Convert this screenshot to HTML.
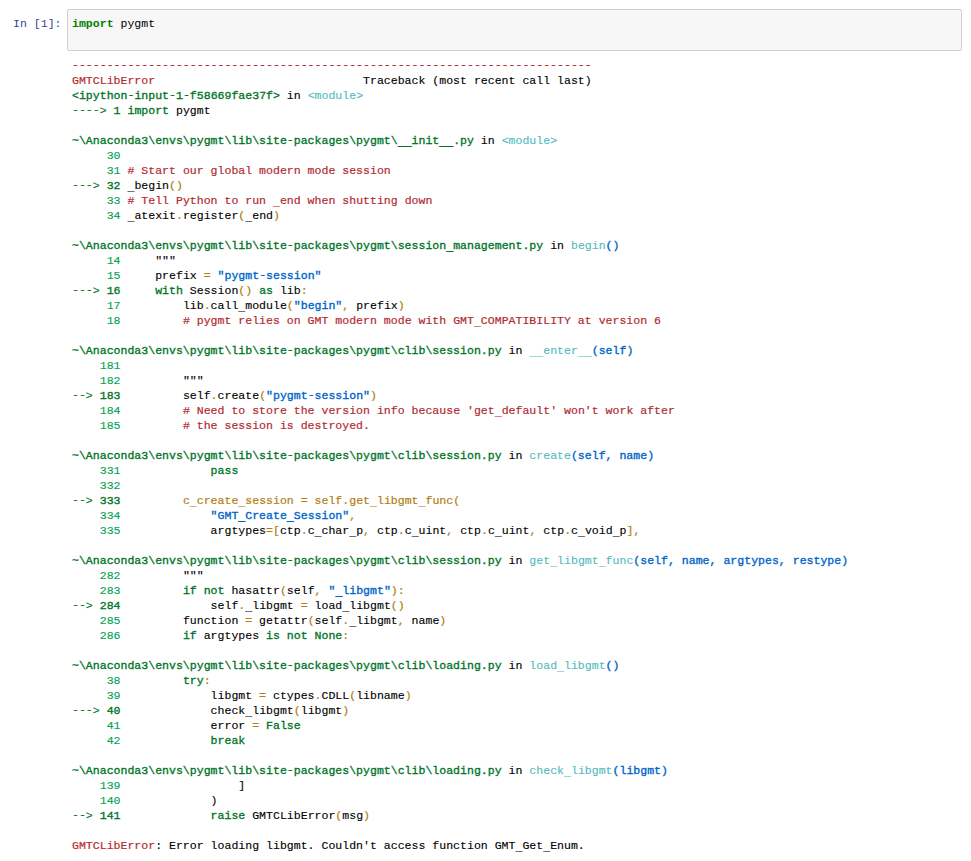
<!DOCTYPE html>
<html><head><meta charset="utf-8">
<style>
html,body{margin:0;padding:0;background:#fff;}
body{width:971px;height:861px;overflow:hidden;position:relative;font-family:"Liberation Mono",monospace;}
.prompt{position:absolute;left:13px;top:16px;color:#303F9F;font-size:11.56px;line-height:15px;white-space:pre;}
.inbox{position:absolute;left:67px;top:9px;width:895px;height:42px;border:1px solid #cfcfcf;border-radius:2px;background:#f7f7f7;box-sizing:border-box;}
.code{position:absolute;left:72px;top:16px;font-size:11.56px;line-height:15px;white-space:pre;color:#000;}
.kw{color:#008000;font-weight:bold;}
pre{position:absolute;left:72px;top:58px;margin:0;font-family:"Liberation Mono",monospace;font-size:11.56px;line-height:15px;color:#000;-webkit-text-stroke:0.12px currentColor;}
.R{color:#b22b31;-webkit-text-stroke:0.2px #b22b31;}
.G{color:#007427;-webkit-text-stroke:0.32px #007427;}
.g{color:#00a250;}
.c{color:#52bbbe;}
.B{color:#0065ca;-webkit-text-stroke:0.35px #0065ca;}
.h{position:relative;top:-1px;}
.u{position:relative;top:2px;}
.a{-webkit-text-stroke:0.1px #007427;}
.y{color:#b27d12;-webkit-text-stroke:0.2px #b27d12;}
</style></head><body>
<div class="prompt">In [1]:</div>
<div class="inbox"></div>
<div class="code"><span class="kw">import</span> pygmt</div>
<pre><span class="R"><span class="h">---------------------------------------------------------------------------</span></span>
<span class="R">GMTCLibError</span>                              Traceback (most recent call last)
<span class="G">&lt;ipython<span class="h">-</span>input<span class="h">-</span>1<span class="h">-</span>f58669fae37f&gt;</span> in <span class="c">&lt;module&gt;</span>
<span class="G"><span class="a"><span class="h">----</span>&gt;</span> 1</span> <span class="G">import</span> pygmt

<span class="G">~\Anaconda3\envs\pygmt\lib\site<span class="h">-</span>packages\pygmt\<span class="u">__</span>init<span class="u">__</span>.py</span> in <span class="c">&lt;module&gt;</span>
<span class="g">     30</span> 
<span class="g">     31</span> <span class="R"># Start our global modern mode session</span>
<span class="G"><span class="a"><span class="h">---</span>&gt;</span> 32</span> <span class="u">_</span>begin<span class="y">()</span>
<span class="g">     33</span> <span class="R"># Tell Python to run <span class="u">_</span>end when shutting down</span>
<span class="g">     34</span> <span class="u">_</span>atexit<span class="y">.</span>register<span class="y">(</span><span class="u">_</span>end<span class="y">)</span>

<span class="G">~\Anaconda3\envs\pygmt\lib\site<span class="h">-</span>packages\pygmt\session<span class="u">_</span>management.py</span> in <span class="c">begin</span><span class="B">()</span>
<span class="g">     14</span>     """
<span class="g">     15</span>     prefix <span class="y">=</span> <span class="B">"pygmt<span class="h">-</span>session"</span>
<span class="G"><span class="a"><span class="h">---</span>&gt;</span> 16</span>     <span class="G">with</span> Session<span class="y">()</span> <span class="G">as</span> lib<span class="y">:</span>
<span class="g">     17</span>         lib<span class="y">.</span>call<span class="u">_</span>module<span class="y">(</span><span class="B">"begin"</span><span class="y">,</span> prefix<span class="y">)</span>
<span class="g">     18</span>         <span class="R"># pygmt relies on GMT modern mode with GMT<span class="u">_</span>COMPATIBILITY at version 6</span>

<span class="G">~\Anaconda3\envs\pygmt\lib\site<span class="h">-</span>packages\pygmt\clib\session.py</span> in <span class="c"><span class="u">__</span>enter<span class="u">__</span></span><span class="B">(self)</span>
<span class="g">    181</span> 
<span class="g">    182</span>         """
<span class="G"><span class="a"><span class="h">--</span>&gt;</span> 183</span>         self<span class="y">.</span>create<span class="y">(</span><span class="B">"pygmt<span class="h">-</span>session"</span><span class="y">)</span>
<span class="g">    184</span>         <span class="R"># Need to store the version info because 'get<span class="u">_</span>default' won't work after</span>
<span class="g">    185</span>         <span class="R"># the session is destroyed.</span>

<span class="G">~\Anaconda3\envs\pygmt\lib\site<span class="h">-</span>packages\pygmt\clib\session.py</span> in <span class="c">create</span><span class="B">(self, name)</span>
<span class="g">    331</span>             <span class="G">pass</span>
<span class="g">    332</span> 
<span class="G"><span class="a"><span class="h">--</span>&gt;</span> 333</span>         <span class="y">c<span class="u">_</span>create<span class="u">_</span>session = self.get<span class="u">_</span>libgmt<span class="u">_</span>func(</span>
<span class="g">    334</span>             <span class="B">"GMT<span class="u">_</span>Create<span class="u">_</span>Session"</span><span class="y">,</span>
<span class="g">    335</span>             argtypes<span class="y">=[</span>ctp<span class="y">.</span>c<span class="u">_</span>char<span class="u">_</span>p<span class="y">,</span> ctp<span class="y">.</span>c<span class="u">_</span>uint<span class="y">,</span> ctp<span class="y">.</span>c<span class="u">_</span>uint<span class="y">,</span> ctp<span class="y">.</span>c<span class="u">_</span>void<span class="u">_</span>p<span class="y">],</span>

<span class="G">~\Anaconda3\envs\pygmt\lib\site<span class="h">-</span>packages\pygmt\clib\session.py</span> in <span class="c">get<span class="u">_</span>libgmt<span class="u">_</span>func</span><span class="B">(self, name, argtypes, restype)</span>
<span class="g">    282</span>         """
<span class="g">    283</span>         <span class="G">if</span> <span class="G">not</span> hasattr<span class="y">(</span>self<span class="y">,</span> <span class="B">"<span class="u">_</span>libgmt"</span><span class="y">):</span>
<span class="G"><span class="a"><span class="h">--</span>&gt;</span> 284</span>             self<span class="y">.</span><span class="u">_</span>libgmt <span class="y">=</span> load<span class="u">_</span>libgmt<span class="y">()</span>
<span class="g">    285</span>         function <span class="y">=</span> getattr<span class="y">(</span>self<span class="y">.</span><span class="u">_</span>libgmt<span class="y">,</span> name<span class="y">)</span>
<span class="g">    286</span>         <span class="G">if</span> argtypes <span class="G">is</span> <span class="G">not</span> <span class="G">None</span><span class="y">:</span>

<span class="G">~\Anaconda3\envs\pygmt\lib\site<span class="h">-</span>packages\pygmt\clib\loading.py</span> in <span class="c">load<span class="u">_</span>libgmt</span><span class="B">()</span>
<span class="g">     38</span>         <span class="G">try</span><span class="y">:</span>
<span class="g">     39</span>             libgmt <span class="y">=</span> ctypes<span class="y">.</span>CDLL<span class="y">(</span>libname<span class="y">)</span>
<span class="G"><span class="a"><span class="h">---</span>&gt;</span> 40</span>             check<span class="u">_</span>libgmt<span class="y">(</span>libgmt<span class="y">)</span>
<span class="g">     41</span>             error <span class="y">=</span> <span class="G">False</span>
<span class="g">     42</span>             <span class="G">break</span>

<span class="G">~\Anaconda3\envs\pygmt\lib\site<span class="h">-</span>packages\pygmt\clib\loading.py</span> in <span class="c">check<span class="u">_</span>libgmt</span><span class="B">(libgmt)</span>
<span class="g">    139</span>                 ]
<span class="g">    140</span>             )
<span class="G"><span class="a"><span class="h">--</span>&gt;</span> 141</span>             <span class="G">raise</span> GMTCLibError<span class="y">(</span>msg<span class="y">)</span>

<span class="R">GMTCLibError</span>: Error loading libgmt. Couldn't access function GMT<span class="u">_</span>Get<span class="u">_</span>Enum.
</pre>
</body></html>
